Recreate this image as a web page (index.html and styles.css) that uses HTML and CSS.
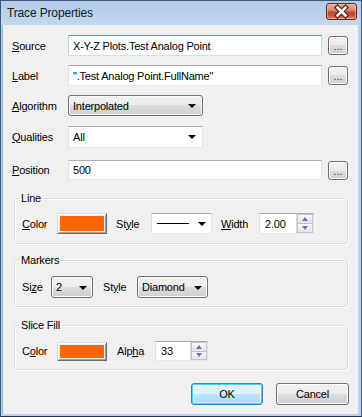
FILE: index.html
```html
<!DOCTYPE html>
<html>
<head>
<meta charset="utf-8">
<link rel="stylesheet" href="styles.css">
</head>
<body>
<div class="window">
  <div class="titlebar">
    <span class="title">Trace Properties</span>
    <button class="close" aria-label="Close">
      <svg width="29" height="15" viewBox="0 0 29 15">
        <path d="M10.5 3.5 L18.5 11.5 M18.5 3.5 L10.5 11.5" stroke="#5a2119" stroke-width="5" stroke-linecap="square" fill="none"/>
        <path d="M10.5 3.5 L18.5 11.5 M18.5 3.5 L10.5 11.5" stroke="#ffffff" stroke-width="2.6" stroke-linecap="square" fill="none"/>
      </svg>
    </button>
  </div>
  <div class="client">
    <div class="row r1">
      <span class="lbl"><u>S</u>ource</span>
      <div class="textbox focus wide">X-Y-Z Plots.Test Analog Point</div>
      <button class="dots">...</button>
    </div>
    <div class="row r2">
      <span class="lbl"><u>L</u>abel</span>
      <div class="textbox wide">".Test Analog Point.FullName"</div>
      <button class="dots">...</button>
    </div>
    <div class="row r3">
      <span class="lbl"><u>A</u>lgorithm</span>
      <div class="ddlist w135"><span class="val">Interpolated</span><span class="arrow"></span></div>
    </div>
    <div class="row r4">
      <span class="lbl"><u>Q</u>ualities</span>
      <div class="combo w135"><span class="val">All</span><span class="arrow"></span></div>
    </div>
    <div class="row r5">
      <span class="lbl"><u>P</u>osition</span>
      <div class="textbox wide">500</div>
      <button class="dots">...</button>
    </div>

    <fieldset class="group g-line">
      <legend>Line</legend>
      <div class="grow">
        <span class="glbl l35"><u>C</u>olor</span>
        <span class="swatch"><span class="fill"></span></span>
        <span class="glbl l35 gapl"><span>St<u>y</u>le</span></span>
        <div class="combo linestyle"><span class="sline"></span><span class="arrow"></span></div>
        <span class="glbl l38 gapl"><u>W</u>idth</span>
        <div class="spin w55"><span class="val">2.00</span><span class="spinbtns"><span class="sb up"></span><span class="sb down"></span></span></div>
      </div>
    </fieldset>

    <fieldset class="group g-markers">
      <legend>Markers</legend>
      <div class="grow">
        <span class="glbl l29">Si<u>z</u>e</span>
        <div class="ddlist w42"><span class="val">2</span><span class="arrow"></span></div>
        <span class="glbl l34 gapm">St<u>y</u>le</span>
        <div class="ddlist w71"><span class="val">Diamond</span><span class="arrow"></span></div>
      </div>
    </fieldset>

    <fieldset class="group g-slice">
      <legend>Slice Fill</legend>
      <div class="grow">
        <span class="glbl l35">C<u>o</u>lor</span>
        <span class="swatch sm"><span class="fill"></span></span>
        <span class="glbl l38 gapm">Alp<u>h</u>a</span>
        <div class="spin w53"><span class="val">33</span><span class="spinbtns"><span class="sb up"></span><span class="sb down"></span></span></div>
      </div>
    </fieldset>

    <div class="buttons">
      <button class="btn default">OK</button>
      <button class="btn">Cancel</button>
    </div>
  </div>
</div>
</body>
</html>
```
FILE: styles.css
```css
* { box-sizing: border-box; }
html, body { margin: 0; padding: 0; }
body {
  width: 362px;
  height: 417px;
  overflow: hidden;
  font-family: "Liberation Sans", Arial, sans-serif;
  font-size: 11px;
  letter-spacing: -0.2px;
  color: #000;
}
u { text-decoration: underline; text-underline-offset: 1px; }

.window {
  width: 362px;
  height: 417px;
  border: 1px solid #3a5a80;
  border-bottom-color: #1c3550;
  background: #bcd3ec;
  display: flex;
  flex-direction: column;
  padding: 0 3px 2px 1px;
}

.titlebar {
  height: 24px;
  flex: none;
  display: flex;
  align-items: center;
  justify-content: space-between;
  background: linear-gradient(to bottom, #b4cbe6 0%, #bbd1ea 50%, #c4d8ef 100%);
  margin: 0 -3px 0 -1px;
  padding: 0 4px 0 6px;
}
.title {
  font-size: 12px;
  letter-spacing: -0.15px;
  color: #0b1a2e;
  margin-top: 0px;
}
.close {
  width: 31px;
  height: 17px;
  margin-top: -3px;
  padding: 0;
  border: 1px solid #6b2418;
  border-radius: 3px;
  background: linear-gradient(to bottom, #e9aa9a 0%, #dd8c78 40%, #c4482f 55%, #c9583e 80%, #dc8a6f 100%);
  box-shadow: inset 0 0 0 1px rgba(255,220,210,0.45);
  display: flex;
  align-items: center;
  justify-content: center;
}
.close svg { display: block; }

.client {
  flex: 1;
  background: #f0f0f0;
  border-left: 1px solid #8fb4d9;
  padding: 10px 9px 0 9px;
  display: flex;
  flex-direction: column;
}

.row {
  display: flex;
  align-items: center;
  height: 21px;
  flex: none;
}
.r2 { margin-top: 9px; }
.r3 { margin-top: 9px; }
.r4 { margin-top: 10px; }
.r5 { margin-top: 13px; height: 20px; }

.lbl {
  width: 56px;
  flex: none;
}

.textbox {
  height: 100%;
  background: #fff;
  border: 1px solid;
  border-color: #abadb3 #e2e3ea #e3e9ef #dbdfe6;
  padding: 0 4px;
  display: flex;
  align-items: center;
  white-space: nowrap;
  overflow: hidden;
}
.textbox.focus {
  border-color: #5794bf #c5daed #c7e2f1 #b7d5ea;
}
.wide { width: 254px; }

.dots {
  width: 20px;
  height: 19px;
  margin-left: 6px;
  padding: 0 0 3px 0;
  border: 1px solid #707070;
  border-radius: 3px;
  background: linear-gradient(to bottom, #f2f2f2 0%, #ebebeb 50%, #dddddd 50%, #cfcfcf 100%);
  box-shadow: inset 0 0 0 1px #fcfcfc;
  font-family: "Liberation Sans", Arial, sans-serif;
  font-size: 11px;
  line-height: 10px;
  color: #1f3a66;
  display: flex;
  align-items: flex-end;
  justify-content: center;
  letter-spacing: 0;
}

.w135 { width: 135px; }
.w42 { width: 42px; }
.w71 { width: 71px; }
.w55 { width: 55px; }
.w53 { width: 53px; }

.ddlist, .combo {
  height: 100%;
  display: flex;
  align-items: center;
  justify-content: space-between;
  padding: 0 5px 0 4px;
  flex: none;
}
.ddlist {
  border: 1px solid #707070;
  border-radius: 3px;
  background: linear-gradient(to bottom, #f2f2f2 0%, #ebebeb 50%, #dddddd 50%, #cfcfcf 100%);
  box-shadow: inset 0 0 0 1px #fbfbfb;
}
.combo {
  background: #fff;
  border: 1px solid;
  border-color: #abadb3 #e2e3ea #e3e9ef #dbdfe6;
}
.r4 .combo { height: 22px; }
.arrow {
  width: 0;
  height: 0;
  border-left: 4px solid transparent;
  border-right: 4px solid transparent;
  border-top: 4px solid #000;
  margin-top: 1px;
  flex: none;
}
.r3 .arrow, .r4 .arrow { margin-right: 1px; }

.group {
  margin: 0 0 0 2px;
  padding: 0;
  border: 1px solid #d5dfe5;
  border-radius: 3px;
  box-shadow: inset 1px 1px 0 #fff, 1px 1px 0 #fff;
  flex: none;
  min-width: 0;
  width: 334px;
}
.group legend {
  margin-left: 4px;
  padding: 0 2px;
  line-height: 13px;
  height: 13px;
}
.g-line { margin-top: 12px; }
.g-line .grow { padding: 8px 0 9px 7px; }
.g-markers { margin-top: 10px; }
.g-markers .grow { padding: 9px 0 8px 7px; }
.g-slice { margin-top: 12px; }
.g-slice .grow { padding: 9px 0 8px 7px; }

.grow {
  display: flex;
  align-items: center;
  height: auto;
}
.grow > * { flex: none; }
.grow { min-height: 0; }
.g-line .grow > .swatch, .g-line .grow > .combo, .g-line .grow > .spin { height: 21px; }
.g-markers .grow > .ddlist { height: 22px; }
.g-slice .grow > .spin { height: 20px; }

.glbl { display: inline-block; }
.l35 { width: 35px; }
.l38 { width: 38px; }
.l29 { width: 29px; }
.l34 { width: 34px; }
.gapl { margin-left: 9px; }
.gapm { margin-left: 10px; }

.swatch {
  width: 50px;
  height: 21px;
  border: 1px solid;
  border-color: #dcdcdc #6a6a6a #6a6a6a #dcdcdc;
  box-shadow: inset 1px 1px 0 #ffffff, inset -1px -1px 0 #a0a0a0;
  background: #f0f0f0;
  padding: 2px;
  display: flex;
}
.swatch.sm { height: 19px; }
.swatch .fill {
  flex: 1;
  background: #ff6600;
}

.linestyle {
  width: 61px;
  padding: 0 5px 0 5px;
}
.sline {
  width: 32px;
  height: 1px;
  background: #000;
  margin-top: 0px;
}

.spin {
  height: 21px;
  background: #fff;
  border: 1px solid;
  border-color: #abadb3 #e2e3ea #e3e9ef #dbdfe6;
  display: flex;
  align-items: center;
  justify-content: space-between;
  padding: 0 0 0 5px;
}
.spinbtns {
  width: 17px;
  align-self: stretch;
  display: flex;
  flex-direction: column;
  border-left: 1px solid #d8d8d8;
}
.sb {
  flex: 1;
  background: linear-gradient(to bottom, #f7f7f7, #e4e4e4);
  border: 1px solid #c4c4c4;
  display: flex;
  align-items: center;
  justify-content: center;
  margin: 0;
}
.sb + .sb { border-top: none; }
.sb.up::after {
  content: "";
  border-left: 3.5px solid transparent;
  border-right: 3.5px solid transparent;
  border-bottom: 4px solid #5d7ba8;
}
.sb.down::after {
  content: "";
  border-left: 3.5px solid transparent;
  border-right: 3.5px solid transparent;
  border-top: 4px solid #5d7ba8;
}

.buttons {
  display: flex;
  justify-content: flex-end;
  gap: 13px;
  margin-top: 13px;
  flex: none;
}
.btn {
  width: 73px;
  height: 22px;
  border: 1px solid #707070;
  border-radius: 3px;
  background: linear-gradient(to bottom, #f2f2f2 0%, #ebebeb 50%, #dddddd 50%, #cfcfcf 100%);
  box-shadow: inset 0 0 0 1px #fcfcfc;
  font-family: "Liberation Sans", Arial, sans-serif;
  font-size: 11px;
  letter-spacing: -0.2px;
  color: #000;
  padding: 0;
}
.btn.default {
  width: 72px;
  border-color: #3c7fb1;
  background: linear-gradient(to bottom, #eaf6fd 0%, #d9f0fc 50%, #bee6fd 50%, #a7d9f5 100%);
  box-shadow: inset 0 0 0 1px #48d1fe, inset 0 0 0 2px rgba(255,255,255,0.5);
}
```
